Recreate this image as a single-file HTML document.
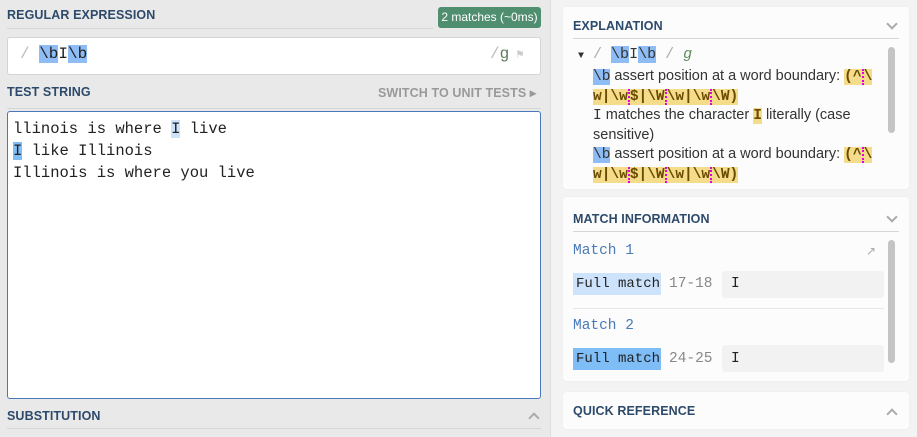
<!DOCTYPE html>
<html><head><style>
*{margin:0;padding:0;box-sizing:border-box}
body{width:917px;height:437px;overflow:hidden;background:#f3f3f3;font-family:"Liberation Sans",sans-serif;position:relative}
.abs{position:absolute;white-space:nowrap}
.left{left:0;top:0;width:551px;height:437px;background:#e9e9e9;border-right:1px solid #ddd}
.h{font-weight:bold;font-size:12.5px;color:#2d4a6b;letter-spacing:0.1px}
.line{height:1px;background:#d6d6d6}
.mono{font-family:"Liberation Mono",monospace}
.hb{background:#8ebcf5}
.card{background:#fcfcfc;border-radius:3px;box-shadow:0 0 1px #ddd}
.y{background:#f4dc8a;color:#6a4a00;font-weight:bold}
.d{border-left:2px dotted #e000e0}
.chev{width:8px;height:8px;border-right:2px solid #aaa;border-bottom:2px solid #aaa}
</style></head><body>
<div class="abs left"></div>
<div class="abs h" style="left:7px;top:8px">REGULAR EXPRESSION</div>
<div class="abs line" style="left:7px;top:28px;width:426px"></div>
<div class="abs" style="left:438px;top:7px;width:103px;height:21px;background:#4f8f70;border-radius:3px;color:#fff;font-size:12px;line-height:21px;text-align:center">2 matches (~0ms)</div>
<div class="abs" style="left:7px;top:37px;width:534px;height:38px;background:#fff;border:1px solid #d4d4d4;border-radius:3px"></div>
<div class="abs mono" style="left:20px;top:45px;font-size:16px;line-height:19px;color:#222"><span style="color:#bbb">/ </span><span class="hb">\b</span>I<span class="hb">\b</span></div>
<div class="abs mono" style="left:490px;top:45px;font-size:16px;line-height:19px;color:#5b7b5b"><span style="color:#bbb">/</span>g<span style="color:#ccc;font-size:12px"> ⚑</span></div>
<div class="abs h" style="left:7px;top:85px">TEST STRING</div>
<div class="abs h" style="left:378px;top:85px;color:#999">SWITCH TO UNIT TESTS ▸</div>
<div class="abs line" style="left:7px;top:108px;width:534px"></div>
<div class="abs" style="left:7px;top:111px;width:534px;height:288px;background:#fff;border:1px solid #4a78b8;border-radius:3px"></div>
<div class="abs mono" style="left:13px;top:118px;font-size:15.5px;line-height:22px;color:#222;white-space:pre">llinois is where <span style="background:#cde3fb">I</span> live
<span style="background:#7fbdf7">I</span> like Illinois
Illinois is where you live</div>
<div class="abs h" style="left:7px;top:409px">SUBSTITUTION</div>
<div class="abs chev" style="left:530px;top:414px;transform:rotate(-135deg)"></div>
<div class="abs line" style="left:7px;top:428px;width:534px"></div>

<div class="abs card" style="left:563px;top:7px;width:346px;height:182px"></div>
<div class="abs h" style="left:573px;top:19px">EXPLANATION</div>
<div class="abs chev" style="left:888px;top:20px;transform:rotate(45deg)"></div>
<div class="abs line" style="left:573px;top:38px;width:326px"></div>
<div class="abs" style="left:888px;top:47px;width:7px;height:86px;background:#c4c4c4;border-radius:4px"></div>
<div class="abs" style="left:578px;top:46px;width:300px;font-size:14.5px;line-height:18.8px;color:#333;white-space:normal">
<div class="mono" style="font-size:15px"><span style="font-size:10px">▼</span> <span style="color:#aaa">/ </span><span class="hb">\b</span>I<span class="hb">\b</span><span style="color:#aaa"> / </span><span style="color:#5b8b5b;font-style:italic">g</span></div>
<div style="padding-left:15px;width:305px"><span class="mono hb">\b</span> assert position at a word boundary: <span class="mono y">(^<span class="d">\</span></span><br><span class="mono y">w|\w<span class="d">$|\W</span><span class="d">\w|\w</span><span class="d">\W)</span></span><br><span class="mono">I</span> matches the character <span class="mono y">I</span> literally (case sensitive)<br><span class="mono hb">\b</span> assert position at a word boundary: <span class="mono y">(^<span class="d">\</span></span><br><span class="mono y">w|\w<span class="d">$|\W</span><span class="d">\w|\w</span><span class="d">\W)</span></span></div>
</div>

<div class="abs card" style="left:563px;top:197px;width:346px;height:184px"></div>
<div class="abs h" style="left:573px;top:212px">MATCH INFORMATION</div>
<div class="abs chev" style="left:888px;top:213px;transform:rotate(45deg)"></div>
<div class="abs line" style="left:573px;top:231px;width:326px"></div>
<div class="abs" style="left:888px;top:240px;width:7px;height:123px;background:#c4c4c4;border-radius:4px"></div>
<div class="abs mono" style="left:573px;top:243px;font-size:14.5px;color:#4a7ab8">Match 1</div>
<div class="abs" style="left:866px;top:244px;font-size:12px;color:#aaa">↗</div>
<div class="abs mono" style="left:573px;top:273px;width:88px;height:22px;background:#cce3fb;font-size:14px;line-height:22px;padding-left:3px;color:#222">Full match</div>
<div class="abs mono" style="left:669px;top:273px;font-size:14.5px;line-height:22px;color:#888">17-18</div>
<div class="abs" style="left:722px;top:271px;width:162px;height:27px;background:#f2f2f2;border-radius:3px"></div>
<div class="abs mono" style="left:731px;top:273px;font-size:14.5px;line-height:22px;color:#222">I</div>
<div class="abs line" style="left:573px;top:308px;width:311px;background:#e6e6e6"></div>
<div class="abs mono" style="left:573px;top:318px;font-size:14.5px;color:#4a7ab8">Match 2</div>
<div class="abs mono" style="left:573px;top:348px;width:88px;height:22px;background:#7fbdf7;font-size:14px;line-height:22px;padding-left:3px;color:#222">Full match</div>
<div class="abs mono" style="left:669px;top:348px;font-size:14.5px;line-height:22px;color:#888">24-25</div>
<div class="abs" style="left:722px;top:345px;width:162px;height:27px;background:#f2f2f2;border-radius:3px"></div>
<div class="abs mono" style="left:731px;top:348px;font-size:14.5px;line-height:22px;color:#222">I</div>

<div class="abs card" style="left:563px;top:392px;width:346px;height:37px"></div>
<div class="abs h" style="left:573px;top:404px">QUICK REFERENCE</div>
<div class="abs chev" style="left:888px;top:410px;transform:rotate(-135deg)"></div>
</body></html>
